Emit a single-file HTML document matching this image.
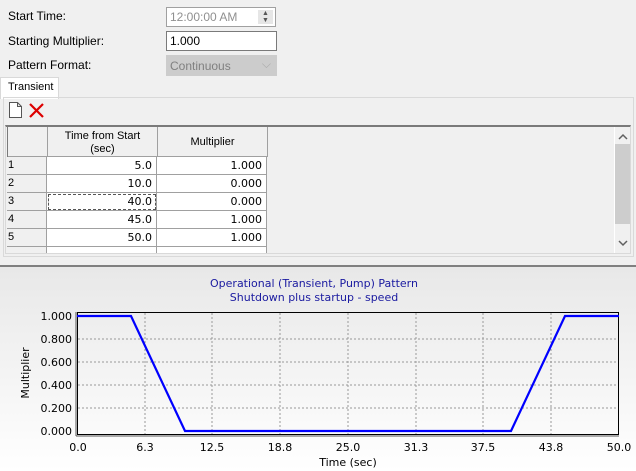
<!DOCTYPE html>
<html><head><style>
body{margin:0;width:636px;height:471px;overflow:hidden;background:#f0f0f0;font-family:"Liberation Sans",sans-serif;font-size:12px;color:#000;position:relative}
.a{position:absolute}
.lbl{left:8px}
.cell{position:absolute;border-right:1px solid #a0a0a0;border-bottom:1px solid #a0a0a0;box-sizing:border-box;font-family:"DejaVu Sans",sans-serif;font-size:11px;text-align:right;padding-right:4px;line-height:17px;background:#fff;color:#000}
.rh{position:absolute;left:7px;width:40px;box-sizing:border-box;border-bottom:1px solid #a0a0a0;border-right:1px solid #a0a0a0;background:#f0f0f0;font-size:11px;line-height:17px;padding-left:1px}
</style></head><body>
<div class="a lbl" style="top:9px">Start Time:</div>
<div class="a lbl" style="top:34px">Starting Multiplier:</div>
<div class="a lbl" style="top:58px">Pattern Format:</div>
<div class="a" style="left:166px;top:7px;width:110px;height:20px;border:1px solid #a0a0a0;background:#fff;box-sizing:border-box;color:#909090;padding:2px 3px">12:00:00 AM
 <div class="a" style="right:2px;top:2px;width:15px;height:14px;background:#e6e6e6;font-size:7px;line-height:7px;text-align:center;color:#555">▲<br>▼</div></div>
<div class="a" style="left:166px;top:31px;width:111px;height:20px;border:1px solid #7a7a7a;background:#fff;box-sizing:border-box;padding:2px 3px">1.000</div>
<div class="a" style="left:166px;top:55px;width:111px;height:21px;border:1px solid #cccccc;background:#cccccc;box-sizing:border-box;color:#808080;padding:3px 3px">Continuous<span class="a" style="right:5px;top:1px;color:#aaa">⌵</span></div>
<div class="a" style="left:0;top:77px;width:59px;height:22px;background:#fff;border:1px solid #d9d9d9;border-bottom:none;box-sizing:border-box;padding:3px 0 0 7px;font-size:11px">Transient</div>
<div class="a" style="left:3px;top:97px;width:631px;height:160px;border:1px solid #d9d9d9;box-sizing:border-box;border-top-color:#d9d9d9"></div>
<svg class="a" style="left:8px;top:101px" width="40" height="18"><path d="M1.5 1.5h8l4 4v11h-12z M9.5 1.5v4h4" fill="#fff" stroke="#555"/><path d="M22 3l13 13M35 3L22 16" stroke="#d00" stroke-width="2.2"/></svg>
<div class="a" style="left:5px;top:125px;width:626px;height:129px;border:1px solid #d9d9d9;border-top:2px solid #7a7a7a;box-sizing:border-box;overflow:hidden">
 <div class="a" style="left:1px;top:0;width:1px;height:130px;background:#7a7a7a"></div>
 <div class="a" style="left:2px;top:0;width:40px;height:30px;border-right:1px solid #a0a0a0;border-bottom:1px solid #a0a0a0;box-sizing:border-box"></div>
 <div class="a" style="left:42px;top:0;width:110px;height:30px;border-right:1px solid #a0a0a0;border-bottom:1px solid #a0a0a0;box-sizing:border-box;font-size:11px;text-align:center;line-height:13px;padding-top:3px">Time from Start<br>(sec)</div>
 <div class="a" style="left:152px;top:0;width:110px;height:30px;border-right:1px solid #a0a0a0;border-bottom:1px solid #a0a0a0;box-sizing:border-box;font-size:11px;text-align:center;line-height:30px">Multiplier</div>
 <div class="a" style="left:608px;top:0;width:16px;height:127px;background:#f0f0f0;border-left:1px solid #fff"></div>
 <div class="a" style="left:609px;top:17px;width:15px;height:80px;background:#cdcdcd"></div>
 <svg class="a" style="left:612px;top:6px" width="10" height="8"><path d="M1 6l4-4 4 4" fill="none" stroke="#606060" stroke-width="1.5"/></svg>
 <svg class="a" style="left:612px;top:112px" width="10" height="8"><path d="M1 2l4 4 4-4" fill="none" stroke="#606060" stroke-width="1.5"/></svg>
</div>
<div class="rh" style="top:157px;left:7px">1</div><div class="cell" style="left:47px;top:157px;width:110px;height:18px">5.0</div><div class="cell" style="left:157px;top:157px;width:110px;height:18px">1.000</div>
<div class="rh" style="top:175px">2</div><div class="cell" style="left:47px;top:175px;width:110px;height:18px">10.0</div><div class="cell" style="left:157px;top:175px;width:110px;height:18px">0.000</div>
<div class="rh" style="top:193px">3</div><div class="cell" style="left:47px;top:193px;width:110px;height:18px;outline:1px dashed #555;outline-offset:-2px">40.0</div><div class="cell" style="left:157px;top:193px;width:110px;height:18px">0.000</div>
<div class="rh" style="top:211px">4</div><div class="cell" style="left:47px;top:211px;width:110px;height:18px">45.0</div><div class="cell" style="left:157px;top:211px;width:110px;height:18px">1.000</div>
<div class="rh" style="top:229px">5</div><div class="cell" style="left:47px;top:229px;width:110px;height:18px">50.0</div><div class="cell" style="left:157px;top:229px;width:110px;height:18px">1.000</div>
<div class="rh" style="top:247px;height:6px;border-bottom:none"></div><div class="cell" style="left:47px;top:247px;width:110px;height:6px;border-bottom:none"></div><div class="cell" style="left:157px;top:247px;width:110px;height:6px;border-bottom:none"></div>
<div class="a" style="left:0;top:265px;width:636px;height:2px;background:#808080"></div>
<div class="a" style="left:0;top:267px;width:636px;height:204px;background:linear-gradient(#e8e8e8,#fff)"></div>
<svg class="a" style="left:0;top:267px" width="636" height="204" font-family="DejaVu Sans,sans-serif" font-size="11">
<text x="314" y="20" text-anchor="middle" fill="#1a1aa0">Operational (Transient, Pump) Pattern</text>
<text x="314" y="34" text-anchor="middle" fill="#1a1aa0">Shutdown plus startup - speed</text>
<rect x="77.5" y="45.5" width="541" height="122" fill="none" stroke="#000"/>
<g stroke="#999" stroke-dasharray="2,2">
<path d="M145 46V167M212 46V167M280 46V167M348 46V167M416 46V167M483 46V167M551 46V167"/>
<path d="M78 72H618M78 95H618M78 118H618M78 141H618"/>
</g>
<polyline points="77,49 131,49 185,164 511,164 565,49 619,49" fill="none" stroke="#0000ff" stroke-width="2.2"/>
<g stroke="#555"><path d="M76 45V169M76 169H619"/></g>
<g fill="#000" text-anchor="end">
<text x="72" y="53">1.000</text><text x="72" y="76">0.800</text><text x="72" y="99">0.600</text><text x="72" y="122">0.400</text><text x="72" y="145">0.200</text><text x="72" y="168">0.000</text>
</g>
<g fill="#000" text-anchor="middle">
<text x="78" y="184">0.0</text><text x="145" y="184">6.3</text><text x="212" y="184">12.5</text><text x="280" y="184">18.8</text><text x="348" y="184">25.0</text><text x="416" y="184">31.3</text><text x="483" y="184">37.5</text><text x="551" y="184">43.8</text><text x="619" y="184">50.0</text>
<text x="348" y="199">Time (sec)</text>
</g>
<text transform="translate(29,106) rotate(-90)" text-anchor="middle" fill="#000">Multiplier</text>
</svg>
</body></html>
